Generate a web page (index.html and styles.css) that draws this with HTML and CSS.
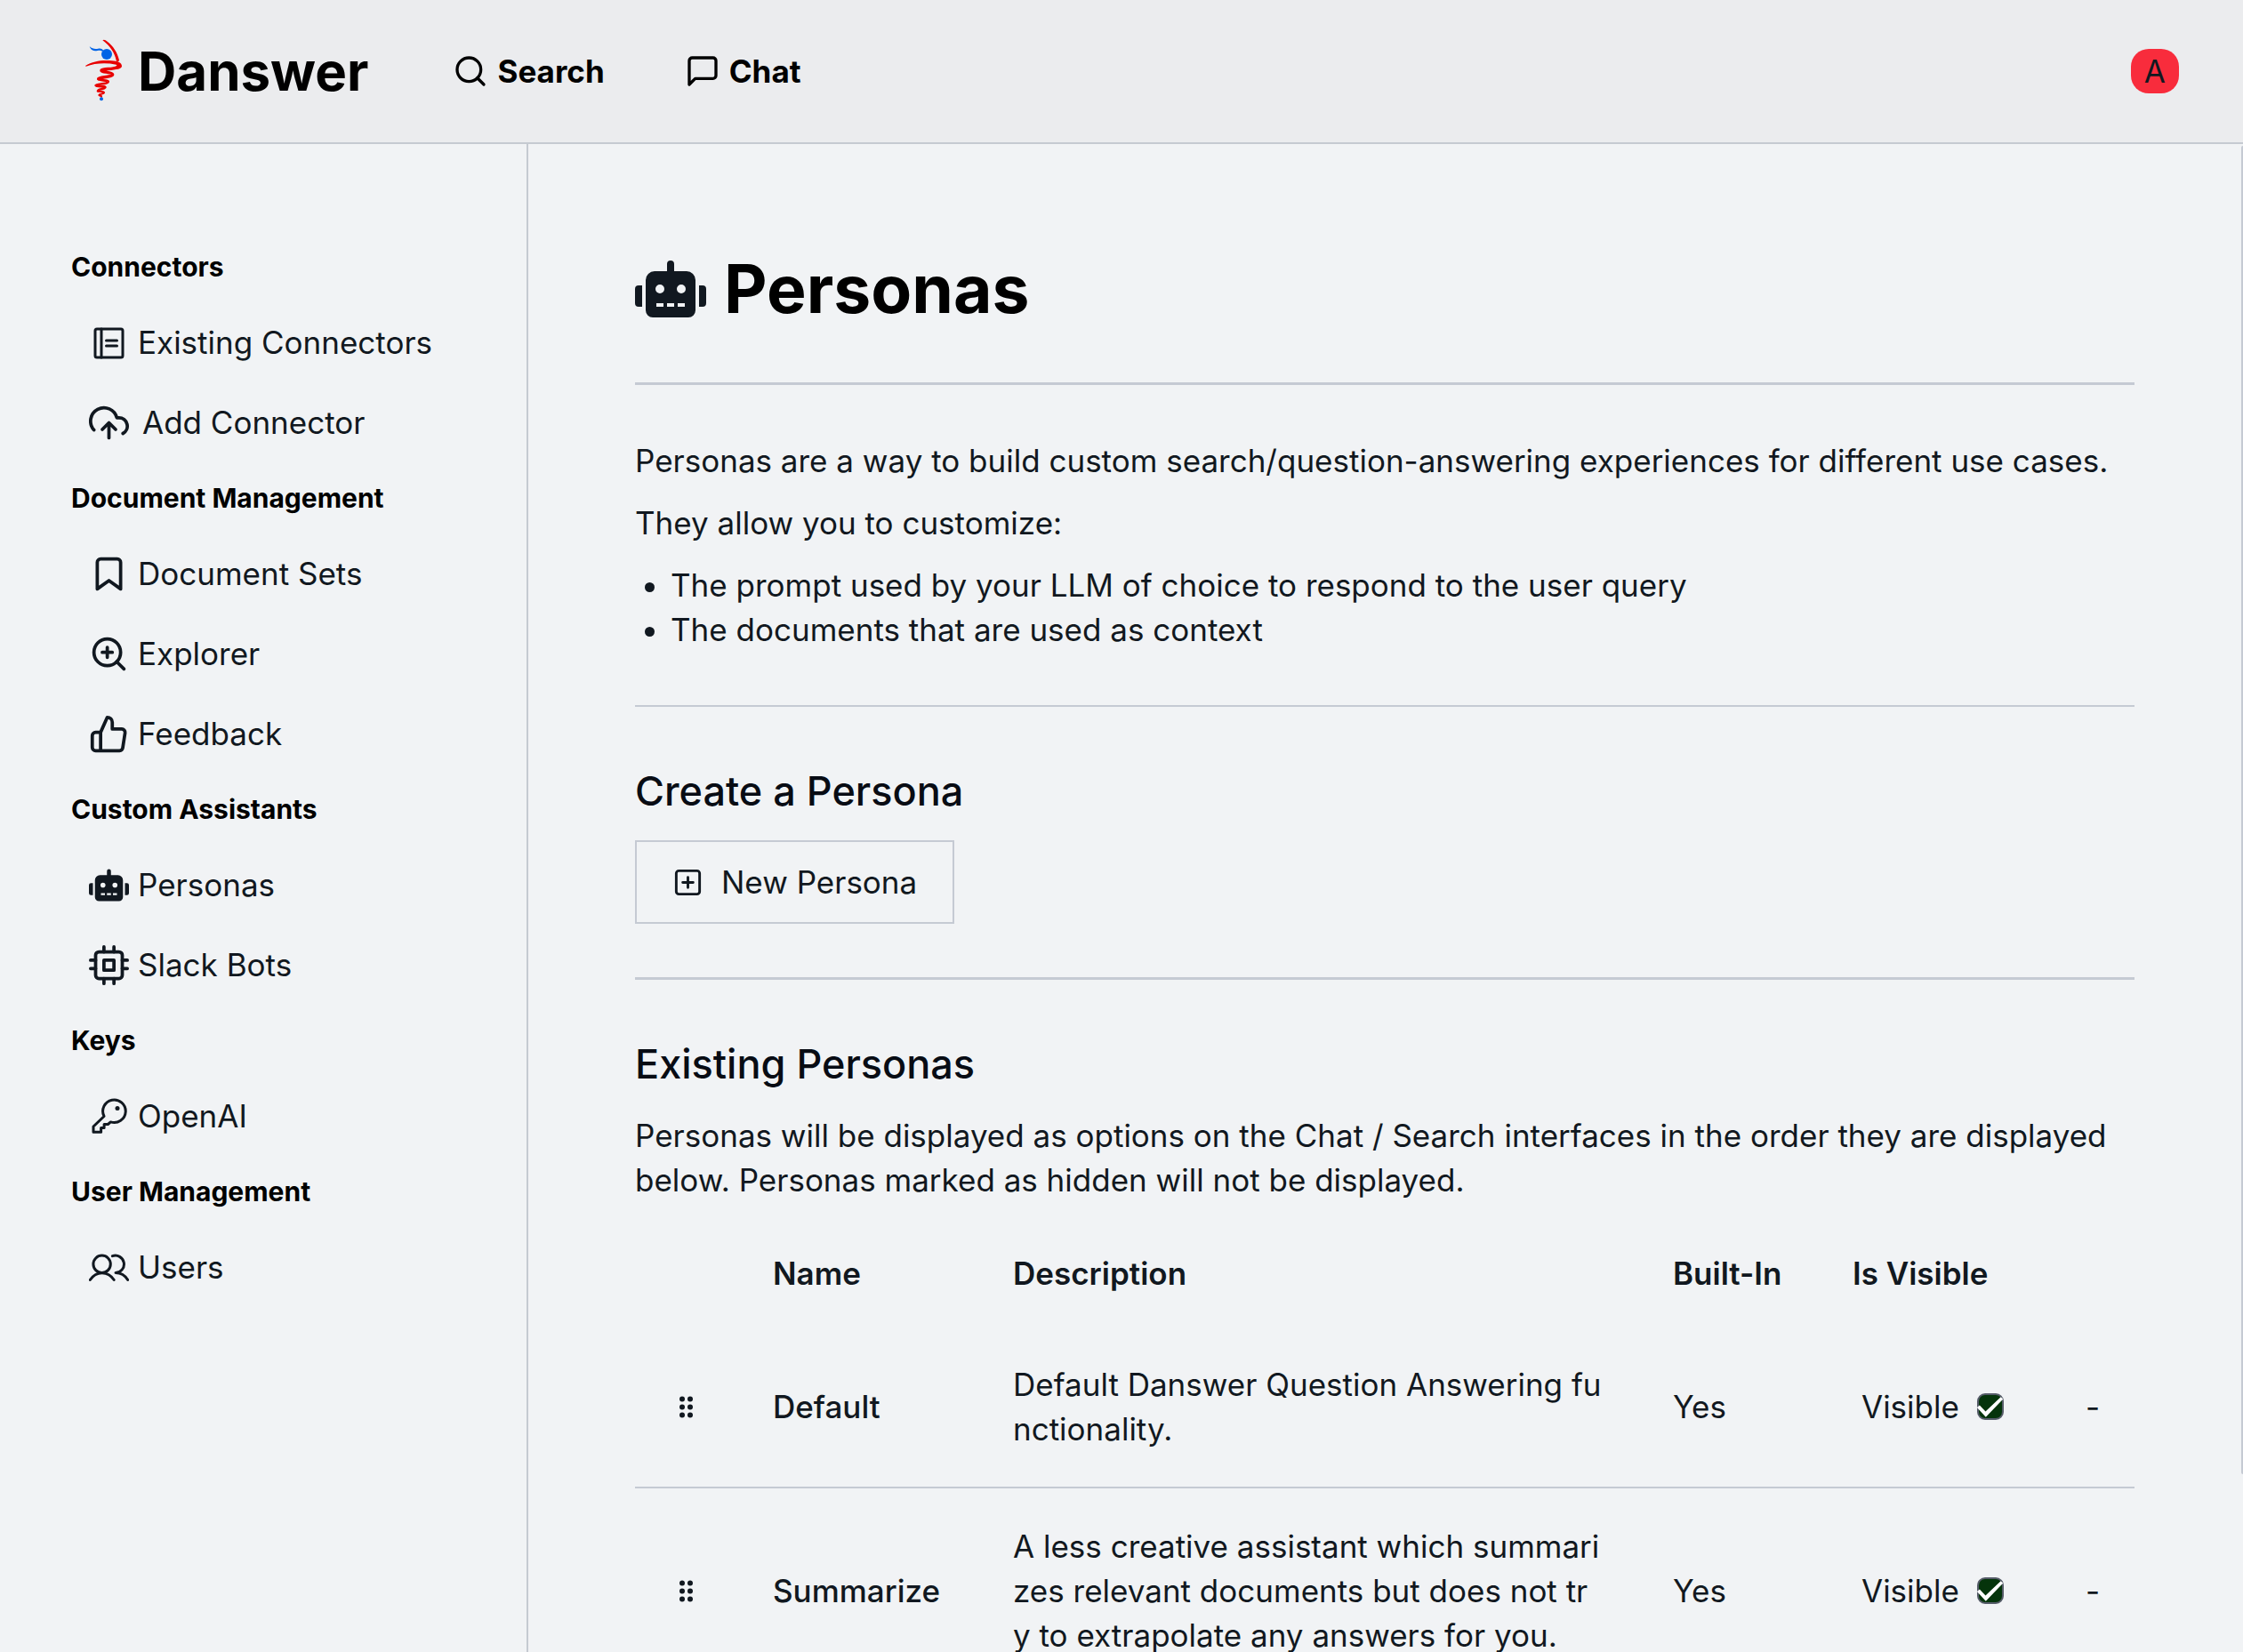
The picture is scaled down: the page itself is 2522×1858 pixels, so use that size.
FILE: index.html
```
<!DOCTYPE html>
<html lang="en">
<head>
    <meta charset="UTF-8">
    <meta name="viewport" content="width=device-width, initial-scale=1.0">
    <title>Danswer - Personas</title>
    <link rel="stylesheet" href="styles.css">
</head>
<body>
    <!-- shared icons -->
    <svg class="sprite" aria-hidden="true">
        <symbol id="robot" viewBox="0 0 640 512">
            <path d="M32 224H64V416H32A32 32 0 0 1 0 384V256A32 32 0 0 1 32 224ZM544 176V448a64 64 0 0 1-64 64H160a64 64 0 0 1-64-64V176a80 80 0 0 1 80-80H288V32a32 32 0 0 1 64 0V96H464A80 80 0 0 1 544 176ZM264 256a40 40 0 1 0-40 40A40 40 0 0 0 264 256Zm-8 128H192v32h64Zm96 0H288v32h64ZM456 256a40 40 0 1 0-40 40A40 40 0 0 0 456 256Zm-8 128H384v32h64ZM640 256V384a32 32 0 0 1-32 32H576V224h32A32 32 0 0 1 640 256Z"/>
        </symbol>
        <symbol id="drag" viewBox="0 0 35 35">
            <circle cx="13" cy="8.5" r="3"/><circle cx="22" cy="8.5" r="3"/>
            <circle cx="13" cy="17.5" r="3"/><circle cx="22" cy="17.5" r="3"/>
            <circle cx="13" cy="26.5" r="3"/><circle cx="22" cy="26.5" r="3"/>
        </symbol>
    </svg>

    <header class="header">
        <a class="logo" href="#">
            <svg class="logo-mark" viewBox="-15 0 225 270" fill="none" stroke-linecap="round" stroke-linejoin="round">
                <path fill="#e80000" d="M91 31C95 27 101 30 107 35C127 50 141 72 147 98C145 104 138 104 137 98C131 73 117 50 91 31Z"/>
                <path fill="#0064e6" d="M47 51C56 60 66 61 76 59C84 57 89 60 94 65L90 68C80 62 75 67 66 67C56 66 49 60 47 51Z"/>
                <circle fill="#0064e6" cx="105" cy="78" r="18"/>
                <path fill="#e80000" d="M33 117C58 101 90 97 122 100C142 101 156 107 156 118C155 126 146 129 135 129L128 120C137 120 142 117 137 113C102 106 66 108 35 119Z"/>
                <path stroke="#e80000" stroke-width="10" d="M140 122C122 130 95 125 87 132C84 140 122 137 125 146C126 155 80 155 77 161"/>
                <path stroke="#e80000" stroke-width="8" d="M77 161C78 167 111 165 110 171C108 180 70 177 68 183C70 189 101 184 100 190C96 197 76 195 75 202"/>
                <path stroke="#e80000" stroke-width="6" d="M75 202C77 206 97 202 96 208C92 214 80 210 79 216C81 219 88 217 87 221"/>
                <circle fill="#0064e6" cx="87" cy="229" r="6"/>
            </svg>
            <span>Danswer</span>
        </a>
        <nav class="top-nav">
            <a href="#">
                <svg class="line-icon" viewBox="0 0 24 24"><circle cx="11" cy="11" r="8"/><path d="M21 21l-4.35-4.35"/></svg>
                Search
            </a>
            <a href="#">
                <svg class="line-icon" viewBox="0 0 24 24"><path d="M21 15a2 2 0 0 1-2 2H7l-4 4V5a2 2 0 0 1 2-2h14a2 2 0 0 1 2 2z"/></svg>
                Chat
            </a>
        </nav>
        <button type="button" class="avatar">A</button>
    </header>

    <div class="layout">
        <aside class="sidebar">
            <section>
                <h2>Connectors</h2>
                <a href="#">
                    <svg class="line-icon thin" viewBox="0 0 45 45"><rect x="7" y="7" width="31" height="32" rx="2"/><path d="M14 7v32M19.500 20h12M19.500 26h12"/></svg>
                    Existing Connectors
                </a>
                <a href="#" class="wide">
                    <svg class="line-icon" viewBox="0 0 24 24"><path d="M16 16l-4-4-4 4M12 12v9"/><path d="M20.390 18.390A5 5 0 0 0 18 9h-1.260A8 8 0 1 0 3 16.300"/></svg>
                    Add Connector
                </a>
            </section>
            <section>
                <h2>Document Management</h2>
                <a href="#">
                    <svg class="line-icon" viewBox="0 0 24 24"><path d="M19 21l-7-5-7 5V5a2 2 0 0 1 2-2h10a2 2 0 0 1 2 2z"/></svg>
                    Document Sets
                </a>
                <a href="#">
                    <svg class="line-icon" viewBox="0 0 24 24"><circle cx="11" cy="11" r="8"/><path d="M21 21l-4.350-4.350M11 8v6M8 11h6"/></svg>
                    Explorer
                </a>
                <a href="#">
                    <svg class="line-icon" viewBox="0 0 24 24"><path d="M14 9V5a3 3 0 0 0-3-3l-4 9v11h11.280a2 2 0 0 0 2-1.700l1.380-9a2 2 0 0 0-2-2.300zM7 22H4a2 2 0 0 1-2-2v-7a2 2 0 0 1 2-2h3"/></svg>
                    Feedback
                </a>
            </section>
            <section>
                <h2>Custom Assistants</h2>
                <a href="#">
                    <svg class="solid-icon"><use href="#robot"/></svg>
                    Personas
                </a>
                <a href="#">
                    <svg class="line-icon" viewBox="0 0 24 24"><rect x="4" y="4" width="16" height="16" rx="2"/><rect x="9" y="9" width="6" height="6"/><path d="M9 1v3M15 1v3M9 20v3M15 20v3M20 9h3M20 14h3M1 9h3M1 14h3"/></svg>
                    Slack Bots
                </a>
            </section>
            <section>
                <h2>Keys</h2>
                <a href="#">
                    <svg class="line-icon thin" viewBox="0 0 45 45"><path d="M17 22.500L5 34v6.200h8.600v-4.700h3.500v-4h4.300l3-2.600A12.800 12.800 0 1 0 17 22.500z"/><circle class="dot" cx="32" cy="13.500" r="2.500"/></svg>
                    OpenAI
                </a>
            </section>
            <section>
                <h2>User Management</h2>
                <a href="#">
                    <svg class="line-icon thin" viewBox="0 0 45 45"><circle cx="14.600" cy="18.800" r="9.700"/><path d="M1.300 36.500C8 26 21.500 26 28.200 36.500M26.400 9.700A9.700 9.700 0 1 1 30 28.500C36 28.500 41 32 43.700 36.500"/></svg>
                    Users
                </a>
            </section>
        </aside>

        <main class="content">
            <div class="page-title">
                <svg><use href="#robot"/></svg>
                <h1>Personas</h1>
            </div>
            <hr class="thick">

            <p>Personas are a way to build custom search/question-answering experiences for different use cases.</p>
            <p class="spaced">They allow you to customize:</p>
            <ul>
                <li>The prompt used by your LLM of choice to respond to the user query</li>
                <li>The documents that are used as context</li>
            </ul>
            <hr>

            <h3>Create a Persona</h3>
            <button type="button" class="new-persona">
                <svg class="line-icon" viewBox="0 0 24 24"><rect x="3" y="3" width="18" height="18" rx="2"/><path d="M12 8v8M8 12h8"/></svg>
                New Persona
            </button>
            <hr class="thick">

            <h3>Existing Personas</h3>
            <p>Personas will be displayed as options on the Chat / Search interfaces in the order they are displayed below. Personas marked as hidden will not be displayed.</p>

            <table>
                <colgroup>
                    <col class="col-drag">
                    <col class="col-name">
                    <col>
                    <col class="col-builtin">
                    <col class="col-visible">
                    <col class="col-action">
                </colgroup>
                <thead>
                    <tr>
                        <th></th>
                        <th>Name</th>
                        <th>Description</th>
                        <th>Built-In</th>
                        <th>Is Visible</th>
                        <th></th>
                    </tr>
                </thead>
                <tbody>
                    <tr>
                        <td><svg class="drag"><use href="#drag"/></svg></td>
                        <td class="name">Default</td>
                        <td class="description">Default Danswer Question Answering functionality.</td>
                        <td>Yes</td>
                        <td><label class="visible">Visible <input type="checkbox" checked></label></td>
                        <td>-</td>
                    </tr>
                    <tr>
                        <td><svg class="drag"><use href="#drag"/></svg></td>
                        <td class="name">Summarize</td>
                        <td class="description">A less creative assistant which summarizes relevant documents but does not try to extrapolate any answers for you.</td>
                        <td>Yes</td>
                        <td><label class="visible">Visible <input type="checkbox" checked></label></td>
                        <td>-</td>
                    </tr>
                </tbody>
            </table>
        </main>
        <div class="scroll-thumb"></div>
    </div>
</body>
</html>
```

FILE: styles.css
```
* {
    box-sizing: border-box;
    margin: 0;
    padding: 0;
}

body {
    height: 100vh;
    display: flex;
    flex-direction: column;
    overflow: hidden;
    font-family: Inter, sans-serif;
    font-size: 35px;
    line-height: 50px;
    color: #111820;
    background-color: #f1f3f5;
}

a {
    color: inherit;
    text-decoration: none;
}

button {
    font: inherit;
    color: inherit;
    cursor: pointer;
}

.sprite {
    display: none;
}

.line-icon {
    fill: none;
    stroke: currentColor;
    stroke-width: 2;
    stroke-linecap: round;
    stroke-linejoin: round;
}

.line-icon.thin {
    stroke-width: 3;
}

.line-icon .dot {
    fill: currentColor;
    stroke: none;
}

/* header */
.header {
    display: flex;
    align-items: center;
    flex-shrink: 0;
    height: 162px;
    padding: 0 72px 0 80px;
    background-color: #ebecee;
    border-bottom: 2px solid #c5cad1;
}

.logo {
    display: flex;
    align-items: center;
    font-size: 60px;
    font-weight: 700;
    color: #000;
}

.logo-mark {
    width: 75px;
    height: 90px;
}

.top-nav {
    display: flex;
    gap: 90px;
    margin-left: 95px;
    font-weight: 700;
    color: #000;
}

.top-nav a {
    display: flex;
    align-items: center;
    gap: 10px;
}

.top-nav svg {
    width: 40px;
    height: 40px;
}

.avatar {
    margin-left: auto;
    padding: 0 15px;
    border: none;
    border-radius: 20px;
    background-color: #f82c3c;
}

/* sidebar */
.layout {
    position: relative;
    display: flex;
    flex: 1;
    min-height: 0;
}

.sidebar {
    flex-shrink: 0;
    width: 594px;
    padding: 118px 40px 0 80px;
    border-right: 2px solid #c5cad1;
}

.sidebar section {
    margin-bottom: 20px;
}

.sidebar h2 {
    margin-bottom: 20px;
    font-size: 30px;
    line-height: 40px;
    font-weight: 700;
    color: #000;
}

.sidebar a {
    display: flex;
    align-items: center;
    gap: 10px;
    padding: 20px;
}

.sidebar a.wide {
    gap: 15px;
}

.sidebar svg {
    width: 45px;
    height: 45px;
}

.solid-icon {
    fill: currentColor;
}

/* content */
.content {
    flex: 1;
    min-width: 0;
    padding: 118px 122px 0 120px;
}

.page-title {
    display: flex;
    align-items: center;
    gap: 20px;
    height: 90px;
}

.page-title svg {
    width: 80px;
    height: 64px;
    fill: currentColor;
}

h1 {
    font-size: 75px;
    line-height: 90px;
    font-weight: 700;
    color: #000;
}

hr {
    height: 2px;
    margin: 60px 0;
    border: none;
    background-color: #c5cad3;
}

hr.thick {
    height: 3px;
}

.spaced {
    margin: 20px 0;
}

ul {
    padding-left: 40px;
}

h3 {
    margin-bottom: 20px;
    font-size: 45px;
    line-height: 70px;
    font-weight: 500;
    color: #080c14;
}

.new-persona {
    display: flex;
    align-items: center;
    gap: 20px;
    padding: 20px 40px;
    border: 2px solid #c5cad3;
    background: none;
}

.new-persona svg {
    width: 35px;
    height: 35px;
}

/* table */
table {
    width: 100%;
    margin-top: 20px;
    table-layout: fixed;
    border-collapse: collapse;
}

.col-drag {
    width: 115px;
}

.col-name {
    width: 270px;
}

.col-builtin {
    width: 202px;
}

.col-visible {
    width: 262px;
}

.col-action {
    width: 95px;
}

th {
    padding: 35px 40px;
    text-align: left;
    font-weight: 600;
    white-space: nowrap;
}

td {
    padding: 40px;
}

tbody tr + tr {
    border-top: 2px solid #c5cad3;
}

.name {
    font-weight: 500;
}

.description {
    word-break: break-all;
}

.drag {
    display: block;
    width: 35px;
    height: 35px;
    fill: currentColor;
}

.visible {
    display: flex;
    align-items: center;
    gap: 20px;
    padding-left: 10px;
}

.visible input {
    appearance: none;
    flex-shrink: 0;
    width: 30px;
    height: 30px;
    border: 2px solid #565c69;
    border-radius: 9px;
    background-color: #05340b;
}

.visible input:checked::before {
    content: "";
    display: block;
    width: 30px;
    height: 30px;
    margin: -2px;
    background-color: #fff;
    clip-path: polygon(0 53%, 10% 45%, 32% 68%, 89% 14%, 98% 22%, 33% 89%);
}

.scroll-thumb {
    position: absolute;
    top: 2px;
    right: 0;
    bottom: 200px;
    width: 2px;
    border-radius: 2px 0 0 2px;
    background-color: #c5cad3;
}
```
